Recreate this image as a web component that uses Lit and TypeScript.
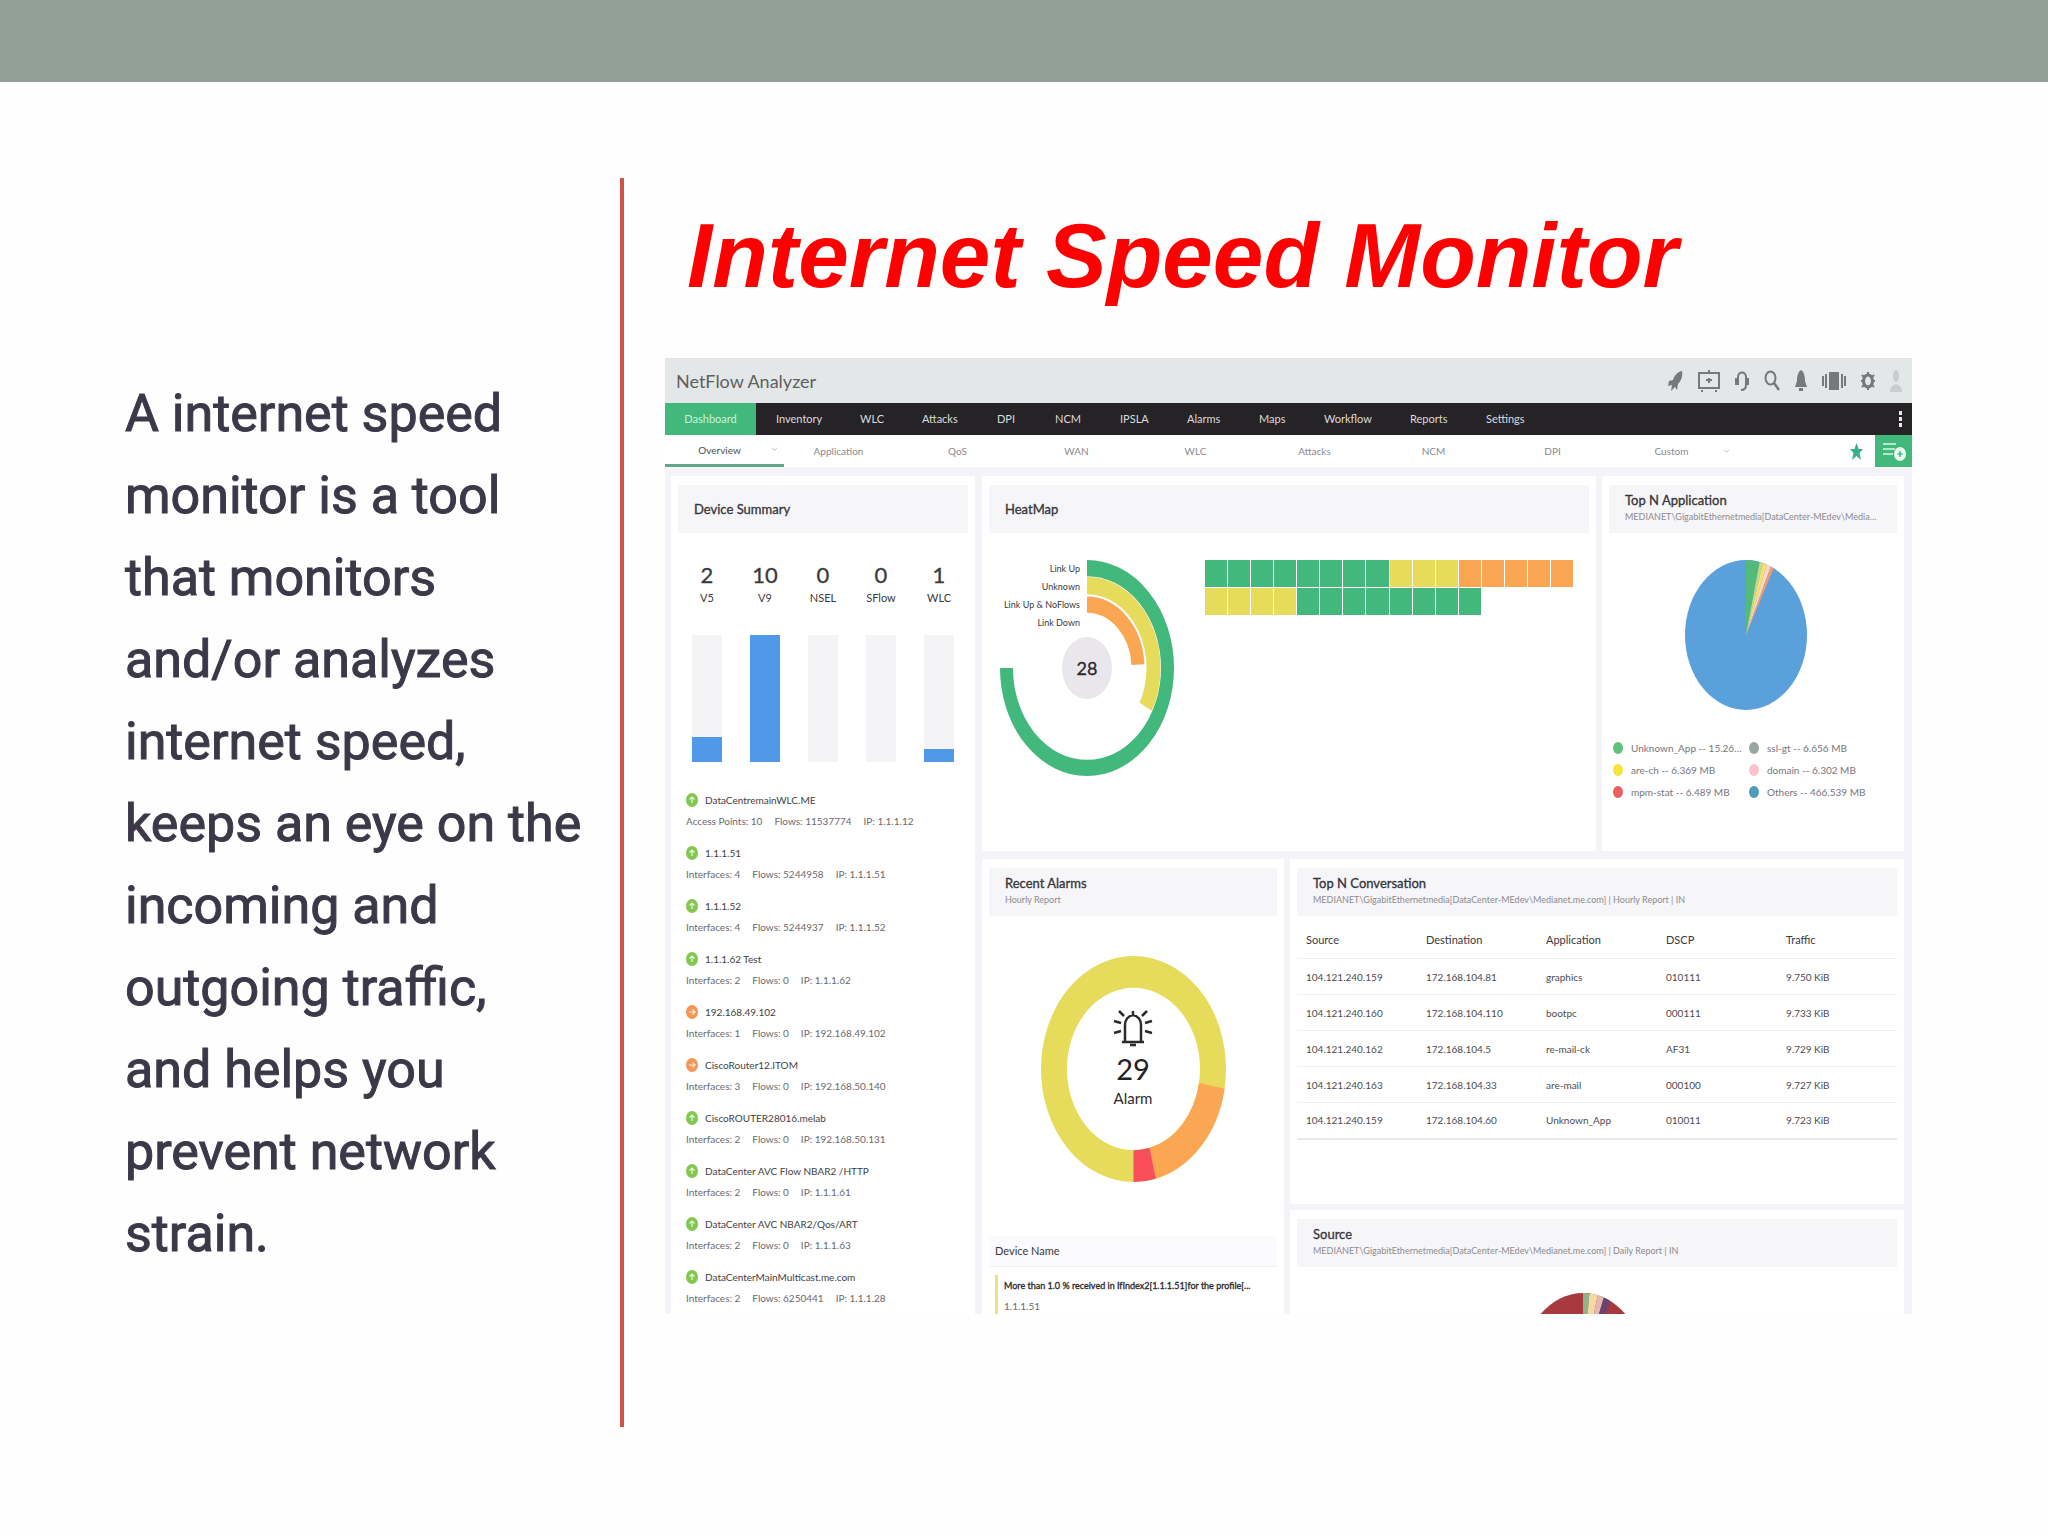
import { LitElement, html, css, svg, nothing } from "lit";
import { customElement, property } from "lit/decorators.js";

const GREEN = "#42b87c";
const YELLOW = "#e6db5b";
const ORANGE = "#fba653";
const RED = "#f94f5c";

/** Point on a circle, with the angle in degrees clockwise from the top. */
function polar(r: number, deg: number): string {
  const a = (deg * Math.PI) / 180;
  return `${(r * Math.sin(a)).toFixed(2)} ${(-r * Math.cos(a)).toFixed(2)}`;
}

function arc(r: number, from: number, to: number): string {
  return `M${polar(r, from)}A${r} ${r} 0 ${to - from > 180 ? 1 : 0} 1 ${polar(r, to)}`;
}

function slice(r: number, from: number, to: number): string {
  return `M0 0L${polar(r, from)}A${r} ${r} 0 ${to - from > 180 ? 1 : 0} 1 ${polar(r, to)}Z`;
}

const tabs = ["Dashboard", "Inventory", "WLC", "Attacks", "DPI", "NCM", "IPSLA", "Alarms", "Maps", "Workflow", "Reports", "Settings"];
const views = ["Overview", "Application", "QoS", "WAN", "WLC", "Attacks", "NCM", "DPI", "Custom"];

const summary = [
  { count: 2, label: "V5", fill: 20 },
  { count: 10, label: "V9", fill: 100 },
  { count: 0, label: "NSEL", fill: 0 },
  { count: 0, label: "SFlow", fill: 0 },
  { count: 1, label: "WLC", fill: 10 },
];

const devices = [
  { name: "DataCentremainWLC.ME", up: true, facts: ["Access Points: 10", "Flows: 11537774", "IP: 1.1.1.12"] },
  { name: "1.1.1.51", up: true, facts: ["Interfaces: 4", "Flows: 5244958", "IP: 1.1.1.51"] },
  { name: "1.1.1.52", up: true, facts: ["Interfaces: 4", "Flows: 5244937", "IP: 1.1.1.52"] },
  { name: "1.1.1.62 Test", up: true, facts: ["Interfaces: 2", "Flows: 0", "IP: 1.1.1.62"] },
  { name: "192.168.49.102", up: false, facts: ["Interfaces: 1", "Flows: 0", "IP: 192.168.49.102"] },
  { name: "CiscoRouter12.ITOM", up: false, facts: ["Interfaces: 3", "Flows: 0", "IP: 192.168.50.140"] },
  { name: "CiscoROUTER28016.melab", up: true, facts: ["Interfaces: 2", "Flows: 0", "IP: 192.168.50.131"] },
  { name: "DataCenter AVC Flow NBAR2 /HTTP", up: true, facts: ["Interfaces: 2", "Flows: 0", "IP: 1.1.1.61"] },
  { name: "DataCenter AVC NBAR2/Qos/ART", up: true, facts: ["Interfaces: 2", "Flows: 0", "IP: 1.1.1.63"] },
  { name: "DataCenterMainMulticast.me.com", up: true, facts: ["Interfaces: 2", "Flows: 6250441", "IP: 1.1.1.28"] },
];

const heat = [...Array(8).fill("up"), ...Array(3).fill("unknown"), ...Array(5).fill("noflow"), ...Array(4).fill("unknown"), ...Array(8).fill("up")];

const apps = [
  { color: "#5fc27c", text: "Unknown_App -- 15.26…" },
  { color: "#9aa5a3", text: "ssl-gt -- 6.656 MB" },
  { color: "#f6e53c", text: "are-ch -- 6.369 MB" },
  { color: "#fbc3cd", text: "domain -- 6.302 MB" },
  { color: "#e8615e", text: "mpm-stat -- 6.489 MB" },
  { color: "#4f9db8", text: "Others -- 466.539 MB" },
];

const conversations = [
  ["104.121.240.159", "172.168.104.81", "graphics", "010111", "9.750 KiB"],
  ["104.121.240.160", "172.168.104.110", "bootpc", "000111", "9.733 KiB"],
  ["104.121.240.162", "172.168.104.5", "re-mail-ck", "AF31", "9.729 KiB"],
  ["104.121.240.163", "172.168.104.33", "are-mail", "000100", "9.727 KiB"],
  ["104.121.240.159", "172.168.104.60", "Unknown_App", "010011", "9.723 KiB"],
];

const mediaPath = "MEDIANET\\GigabitEthernetmedia[DataCenter-MEdev\\Medianet.me.com]";

const tools = [
  { name: "Getting started", w: 16, art: svg`<path fill="currentColor" d="M15 1c-5 1-8 5-9 9l-4 1-1 5 4-1-1 6 4-4 2 3 1-6c3-3 5-8 4-13z"/>` },
  { name: "Add widget", w: 22, art: svg`<path fill="none" stroke="currentColor" stroke-width="2" d="M1 3h20v15H1zM11 0v3M11 8v5M8 10h6M3 21h2M17 21h2"/>` },
  { name: "Support", w: 14, art: svg`<path fill="none" stroke="currentColor" stroke-width="2" d="M3 14V7c0-6 8-6 8 0v8c0 4-3 5-5 5"/><path fill="currentColor" d="M0 8h4v7H0zM10 8h4v7h-4z"/>` },
  { name: "Search", w: 16, art: svg`<ellipse cx="6.500" cy="8" rx="5" ry="6.500" fill="none" stroke="currentColor" stroke-width="2"/><path stroke="currentColor" stroke-width="2.500" d="M10 13l5 7"/>` },
  { name: "Notifications", w: 12, art: svg`<path fill="currentColor" d="M6 0c3 2 4 6 4 11l2 6H0l2-6C2 6 3 2 6 0zM4 18h4v3H4z"/>` },
  { name: "Apps", w: 24, art: svg`<path fill="currentColor" d="M7 2h10v18H7zM3 4h2v14H3zM19 4h2v14h-2zM0 6h2v10H0zM22 6h2v10h-2z"/>` },
  { name: "Settings", w: 14, art: svg`<ellipse cx="7" cy="11" rx="4.500" ry="6" fill="none" stroke="currentColor" stroke-width="3"/><path stroke="currentColor" stroke-width="2" d="M7 2v3M7 17v3M0 11h2M12 11h2M1 5l2 2M11 15l2 2M1 17l2-2M11 7l2-2"/>` },
];

@customElement("pie-chart")
class PieChart extends LitElement {
  static styles = css`
    :host { display: block; }
    .pie { display: block; width: 122px; height: 150px; }
  `;
  @property({ attribute: false }) base = "#5aa1dc";
  @property({ attribute: false }) slices: { from: number; to: number; color: string }[] = [];
  render() {
    return html`<svg class="pie" viewBox="-61 -61 122 122" preserveAspectRatio="none" role="img">
      <circle r="61" fill=${this.base} />
      ${this.slices.map((s) => svg`<path d=${slice(61, s.from, s.to)} fill=${s.color} />`)}
    </svg>`;
  }
}

@customElement("dash-card")
class DashCard extends LitElement {
  static styles = css`
    :host { display: block; background: #fff; padding: 9px 7px; min-width: 0; }
    .head {
      box-sizing: border-box; height: 48px; padding: 0 16px; background: #f6f5f8;
      display: flex; flex-direction: column; justify-content: center;
    }
    .title { margin: 0; font-size: 13px; line-height: 16px; font-weight: 400; color: #353437; -webkit-text-stroke: 0.3px #353437; }
    .sub { margin: 0; font-size: 9px; line-height: 18px; color: #8d8b90; white-space: nowrap; overflow: hidden; text-overflow: ellipsis; }
  `;
  @property() heading = "";
  @property() sub = "";
  render() {
    return html`
      <header class="head">
        <h2 class="title">${this.heading}</h2>
        ${this.sub ? html`<p class="sub">${this.sub}</p>` : nothing}
      </header>
      <slot></slot>
    `;
  }
}

@customElement("netflow-dashboard")
class NetflowDashboard extends LitElement {
  static styles = css`
    :host {
      display: block; overflow: hidden; background: #f5f3f7; color: #3a393c;
      font-family: "Lato", sans-serif; font-size: 10px; line-height: 16px;
    }
    a { color: inherit; text-decoration: none; }
    button { border: 0; padding: 0; background: none; color: inherit; font: inherit; display: block; }
    svg { display: block; }

    .brand { display: flex; align-items: center; justify-content: space-between; height: 45px; padding: 0 10px 0 11px; background: #e4e7e8; }
    .name { margin: 0; font-size: 18px; line-height: 28px; font-weight: 400; color: #5d5f61; }
    .tools { display: flex; align-items: center; gap: 15px; color: #76787a; }
    .user { color: #c9cccd; }

    .tabs { display: flex; height: 32px; background: #252326; color: #dcdcdd; font-size: 11px; }
    .tablist { display: grid; flex: 1; grid-template-columns: 91fr 104fr 62fr 75fr 58fr 65fr 67fr 72fr 65fr 86fr 76fr 404fr; }
    .tab { display: flex; align-items: center; }
    .tab:nth-child(2) { padding-left: 20px; }
    .tab.on { justify-content: center; background: #42b87c; color: #c9f3da; }

    .views { display: flex; height: 32px; background: #fff; color: #8b898e; }
    .viewlist { display: grid; grid-template-columns: repeat(9, 1fr); flex: 1071; }
    .view { display: flex; align-items: center; justify-content: center; position: relative; padding-right: 10px; }
    .view.on { color: #4c4b4f; border-bottom: 3px solid #64a58a; }
    .caret { position: absolute; right: 6px; width: 7px; color: #b0aeb3; }
    .actions { display: flex; flex: 176; align-items: stretch; justify-content: flex-end; gap: 12px; }
    .star { color: #35b184; display: flex; align-items: center; }
    .edit { width: 37px; display: flex; align-items: center; justify-content: center; background: #42b87c; color: #d9f7e5; }

    .board { display: grid; grid-template-columns: minmax(0, 304fr) minmax(0, 922fr); gap: 7px; padding: 9px 8px 0 6px; }
    .right { display: grid; gap: 8px; align-content: start; }
    .row1 { display: grid; grid-template-columns: minmax(0, 614fr) minmax(0, 302fr); gap: 6px; min-height: 375px; }
    .row2 { display: grid; grid-template-columns: minmax(0, 302fr) minmax(0, 614fr); gap: 6px; }
    .stack { display: grid; gap: 6px; align-content: start; }

    .summary { display: grid; grid-template-columns: repeat(5, 1fr); padding: 28px 0; }
    .stat { display: flex; flex-direction: column; align-items: center; color: #3a393c; }
    .num { font-size: 22px; line-height: 28px; -webkit-text-stroke: 0.3px #3a393c; }
    .key { font-size: 11px; line-height: 18px; }
    .track { display: flex; align-items: flex-end; width: 30px; height: 127px; margin-top: 28px; background: #f4f3f6; }
    .fill { width: 100%; background: #4f99e8; }

    .devices { list-style: none; margin: 0; padding: 0 0 0 8px; }
    .device { height: 53px; white-space: nowrap; }
    .dname { display: flex; align-items: center; gap: 7px; line-height: 20px; color: #3f3e42; }
    .facts { display: flex; gap: 12px; line-height: 22px; color: #6b696e; }

    .heat { display: flex; align-items: flex-start; padding: 27px 16px 0 11px; }
    .rings { position: relative; width: 174px; height: 216px; flex: none; }
    .levels { position: absolute; right: 94px; top: 0; margin: 0; padding: 0; list-style: none; text-align: right; white-space: nowrap; font-size: 9px; line-height: 18px; }
    .middle { position: absolute; inset: 0; display: flex; flex-direction: column; align-items: center; justify-content: center; }
    .alarm .middle { padding-bottom: 20px; }
    .total { font-size: 18px; line-height: 28px; color: #29282b; -webkit-text-stroke: 0.3px #29282b; }
    .cells { flex: 1; margin-left: 31px; display: grid; grid-template-columns: repeat(16, 1fr); gap: 1px; }
    .cell { height: 27px; }
    .up { background: #42b87c; }
    .unknown { background: #e6db5b; }
    .noflow { background: #fba653; }

    .center { display: flex; justify-content: center; }
    .pieA { padding-top: 27px; padding-right: 15px; }
    .pieB { padding-top: 26px; padding-right: 28px; height: 150px; }
    .legend { list-style: none; margin: 27px 0 0; padding: 0 0 0 4px; display: grid; grid-template-columns: minmax(0, 136fr) minmax(0, 148fr); font-size: 10px; line-height: 22px; color: #77757a; white-space: nowrap; }
    .entry { display: flex; align-items: center; gap: 8px; }
    .dot { width: 10px; height: 12px; border-radius: 50%; flex: none; }

    .alarm { position: relative; width: 185px; height: 226px; margin: 40px auto 54px; }
    .count { font-size: 29px; line-height: 36px; margin-top: 4px; color: #222124; }
    .word { font-size: 15px; line-height: 22px; color: #2d2c2f; }
    .colname { background: #fbfafc; border-bottom: 1px solid #efedf1; padding: 6px; line-height: 18px; font-size: 11px; }
    .event { margin: 8px 0 0 6px; padding-left: 6px; border-left: 3px solid #e9e37f; height: 60px; }
    .msg { margin: 0; line-height: 22px; white-space: nowrap; color: #29282b; font-size: 9px; -webkit-text-stroke: 0.3px #29282b; }
    .ip { margin: 0; line-height: 18px; color: #6b696e; }

    .convo { width: 100%; table-layout: fixed; border-collapse: collapse; margin-top: 6px; margin-bottom: 55px; border-bottom: 2px solid #e9e7ec; }
    .convo th { font-weight: 400; font-size: 11px; text-align: left; height: 36px; padding: 0 9px; color: #3a393c; }
    .convo td { height: 36px; padding: 0 9px; border-top: 1px solid #f1eff3; box-sizing: border-box; color: #4d4b50; }
  `;

  private caret() {
    return html`<svg class="caret" viewBox="0 0 8 6" width="7" height="5"><path d="M1 1l3 3 3-3" fill="none" stroke="currentColor" /></svg>`;
  }

  private brand() {
    return html`<header class="brand">
      <h1 class="name">NetFlow Analyzer</h1>
      <div class="tools">
        ${tools.map((t) => html`<button aria-label=${t.name}><svg width=${t.w} height="22" viewBox="0 0 ${t.w} 22">${t.art}</svg></button>`)}
        <button class="user" aria-label="Account">
          <svg width="12" height="24" viewBox="0 0 12 24"><ellipse cx="6" cy="7" rx="3" ry="6" fill="currentColor" /><path d="M0 23c0-10 12-10 12 0z" fill="currentColor" /></svg>
        </button>
      </div>
    </header>`;
  }

  private nav() {
    return html`
      <nav class="tabs" aria-label="Main">
        <div class="tablist">${tabs.map((t, i) => html`<a class="tab ${i ? "" : "on"}" href="#">${t}</a>`)}</div>
        <button aria-label="More">
          <svg width="22" height="32" viewBox="0 0 22 32"><path fill="#e8e8e8" d="M9 8h3v4H9zM9 14h3v4H9zM9 20h3v4H9z" /></svg>
        </button>
      </nav>
      <nav class="views" aria-label="Views">
        <div class="viewlist">
          ${views.map((v, i) => html`<a class="view ${i ? "" : "on"}" href="#">${v}${i === 0 || i === 8 ? this.caret() : nothing}</a>`)}
        </div>
        <div class="actions">
          <button class="star" aria-label="Favourite">
            <svg width="13" height="17" viewBox="0 0 13 17"><path fill="currentColor" d="M6.500 0l2 6H13L9.500 10l1.500 7-4.500-4L2 17l1.500-7L0 6h4.500z" /></svg>
          </button>
          <button class="edit" aria-label="Edit dashboard">
            <svg width="26" height="22" viewBox="0 0 26 22"><path stroke="currentColor" stroke-width="1.500" d="M2 4h13M2 9h12M2 14h10" /><ellipse cx="19" cy="14" rx="6" ry="7" fill="#e9fbf0" /><path stroke="#42b87c" stroke-width="1.500" d="M19 11v6M16.500 14h5" /></svg>
          </button>
        </div>
      </nav>
    `;
  }

  private deviceCard() {
    return html`<dash-card heading="Device Summary">
      <div class="summary">
        ${summary.map((s) => html`<div class="stat">
          <span class="num">${s.count}</span><span class="key">${s.label}</span>
          <div class="track"><div class="fill" style="height:${s.fill}%"></div></div>
        </div>`)}
      </div>
      <ul class="devices">
        ${devices.map((d) => html`<li class="device">
          <div class="dname">
            <svg width="12" height="14" viewBox="0 0 12 14">
              <ellipse cx="6" cy="7" rx="6" ry="7" fill=${d.up ? "#83c750" : "#f79457"} />
              <path d=${d.up ? "M6 10V4M3.500 6.500L6 4l2.500 2.500" : "M3 7h6M6.500 4.500L9 7 6.500 9.500"} fill="none" stroke="#e9f7dc" stroke-width="1.200" />
            </svg>
            ${d.name}
          </div>
          <div class="facts">${d.facts.map((f) => html`<span>${f}</span>`)}</div>
        </li>`)}
      </ul>
    </dash-card>`;
  }

  private heatCard() {
    return html`<dash-card heading="HeatMap">
      <div class="heat">
        <div class="rings">
          <svg width="174" height="216" viewBox="-87 -87 174 174" preserveAspectRatio="none">
            <path d=${arc(80.5, 0, 270)} fill="none" stroke=${GREEN} stroke-width="13" />
            <path d=${arc(66.5, 0, 118)} fill="none" stroke=${YELLOW} stroke-width="14" />
            <path d=${arc(51, 0, 87)} fill="none" stroke=${ORANGE} stroke-width="13" />
            <circle r="25" fill="#e9e7eb" />
          </svg>
          <ul class="levels"><li>Link Up</li><li>Unknown</li><li>Link Up &amp; NoFlows</li><li>Link Down</li></ul>
          <div class="middle"><span class="total">28</span></div>
        </div>
        <div class="cells">${heat.map((h) => html`<div class="cell ${h}"></div>`)}</div>
      </div>
    </dash-card>`;
  }

  private appCard() {
    return html`<dash-card heading="Top N Application" sub=${mediaPath}>
      <div class="center pieA">
        <pie-chart .slices=${[
          { from: 0, to: 13, color: "#54ba7c" },
          { from: 13, to: 16, color: "#c9d98a" },
          { from: 16, to: 20, color: "#f7e06c" },
          { from: 20, to: 24, color: "#fbd9c0" },
          { from: 24, to: 27, color: "#ee9a76" },
        ]}></pie-chart>
      </div>
      <ul class="legend">
        ${apps.map((a) => html`<li class="entry"><span class="dot" style="background:${a.color}"></span>${a.text}</li>`)}
      </ul>
    </dash-card>`;
  }

  private alarmCard() {
    return html`<dash-card heading="Recent Alarms" sub="Hourly Report">
      <div class="alarm">
        <svg width="185" height="226" viewBox="-92.500 -92.500 185 185" preserveAspectRatio="none">
          <circle r="79.500" fill="none" stroke=${YELLOW} stroke-width="26" />
          <path d=${arc(79.5, 100, 166)} fill="none" stroke=${ORANGE} stroke-width="26" />
          <path d=${arc(79.5, 166, 180)} fill="none" stroke=${RED} stroke-width="26" />
        </svg>
        <div class="middle">
          <svg width="40" height="38" viewBox="0 0 40 38">
            <path d="M12 32V16c0-5 3-9 8-10 5 1 8 5 8 10v16M20 2v4M9 33h22M17 36h6" fill="none" stroke="#2b2a2d" stroke-width="2.500" />
            <path d="M6 2l5 5M34 2l-5 5M1 12l7 2M39 12l-7 2M1 24l7-2M39 24l-7-2" stroke="#2b2a2d" stroke-width="2.500" />
          </svg>
          <span class="count">29</span><span class="word">Alarm</span>
        </div>
      </div>
      <div class="colname">Device Name</div>
      <div class="event">
        <p class="msg">More than 1.0 % received in IfIndex2[1.1.1.51]for the profile[...</p>
        <p class="ip">1.1.1.51</p>
      </div>
    </dash-card>`;
  }

  private convoCard() {
    return html`<dash-card heading="Top N Conversation" sub="${mediaPath} | Hourly Report | IN">
      <table class="convo">
        <thead><tr>${["Source", "Destination", "Application", "DSCP", "Traffic"].map((h) => html`<th scope="col">${h}</th>`)}</tr></thead>
        <tbody>${conversations.map((r) => html`<tr>${r.map((c) => html`<td>${c}</td>`)}</tr>`)}</tbody>
      </table>
    </dash-card>`;
  }

  private sourceCard() {
    return html`<dash-card heading="Source" sub="${mediaPath} | Daily Report | IN">
      <div class="center pieB">
        <pie-chart .base=${"#a83a3e"} .slices=${[
          { from: 0, to: 6, color: "#8db58a" },
          { from: 6, to: 14, color: "#f4d9a0" },
          { from: 14, to: 20, color: "#e3b9b4" },
          { from: 20, to: 27, color: "#6d4273" },
        ]}></pie-chart>
      </div>
    </dash-card>`;
  }

  render() {
    return html`
      ${this.brand()} ${this.nav()}
      <div class="board">
        ${this.deviceCard()}
        <div class="right">
          <div class="row1">${this.heatCard()}${this.appCard()}</div>
          <div class="row2">${this.alarmCard()}<div class="stack">${this.convoCard()}${this.sourceCard()}</div></div>
        </div>
      </div>
    `;
  }
}

@customElement("app-root")
class AppRoot extends LitElement {
  static styles = css`
    :host { display: flex; flex-direction: column; min-height: 100vh; background: #fefefe; }
    .band { height: 82px; background: #91a198; }
    .slide { flex: 1; display: grid; grid-template-columns: minmax(0, 495fr) 4px minmax(0, 1288fr); padding: 96px 136px 109px 125px; }
    .note {
      margin: 0; padding-top: 195px; color: #3c3848; white-space: nowrap;
      font-family: "Roboto", sans-serif; font-size: 52px; line-height: 82px;
      -webkit-text-stroke: 1px #3c3848;
    }
    .rule { background: #d05343; }
    .content { padding: 26px 0 0 41px; }
    .headline {
      margin: 0 0 50px; padding-left: 22px; color: #fe0000;
      font: italic 700 91px/104px "Liberation Sans", Arial, sans-serif;
    }
    .shot { aspect-ratio: 1247 / 956; min-height: 0; }
  `;
  render() {
    return html`
      <div class="band"></div>
      <main class="slide">
        <p class="note">
          A internet speed<br />monitor is a tool<br />that monitors<br />and/or analyzes<br />internet speed,<br />keeps an eye on the<br />incoming and<br />outgoing traffic,<br />and helps you<br />prevent network<br />strain.
        </p>
        <div class="rule"></div>
        <section class="content">
          <h1 class="headline">Internet Speed Monitor</h1>
          <netflow-dashboard class="shot"></netflow-dashboard>
        </section>
      </main>
    `;
  }
}
